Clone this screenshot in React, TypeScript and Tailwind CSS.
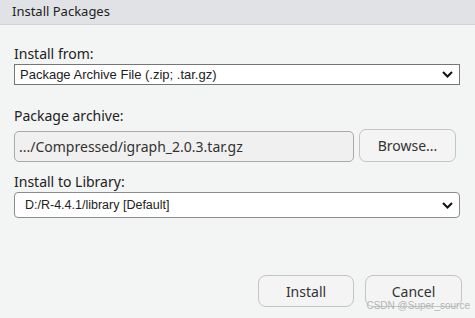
import React from "react";

function Chevron() {
  return (
    <svg width="11" height="7" viewBox="0 0 11 7" className="shrink-0">
      <polyline points="1,1 5.5,5.5 10,1" fill="none" stroke="#111" strokeWidth="2" />
    </svg>
  );
}

export default function App() {
  const ui = { fontFamily: '"Noto Sans", "Open Sans", sans-serif' };
  const arial = { fontFamily: '"Liberation Sans", Arial, sans-serif' };

  return (
    <div className="relative w-[475px] h-[318px] bg-[#f3f4f4] text-[#222] overflow-hidden" style={ui}>
      {/* Title bar */}
      <div className="h-[25px] bg-[#e1e2e6] border-b border-[#d2d4d8] flex items-center pl-[12px] text-[13px]">
        Install Packages
      </div>

      <div className="pl-[14px] pr-[15px]">
        <div className="mt-[19px] text-[14px] leading-[20px]">Install from:</div>
        <div
          className="h-[21px] bg-white border border-[#767676] flex items-center justify-between pl-[5px] pr-[6px] text-[13px]"
          style={arial}
        >
          <span>Package Archive File (.zip; .tar.gz)</span>
          <Chevron />
        </div>

        <div className="mt-[21px] text-[14px] leading-[20px]">Package archive:</div>
        <div className="mt-[5px] flex gap-[5px]">
          <div className="w-[340px] h-[31px] rounded-[5px] border border-[#a9a9a9] bg-[#f0f0f0] flex items-center pl-[4px] text-[14px] text-[#333]">
            .../Compressed/igraph_2.0.3.tar.gz
          </div>
          <button className="w-[97px] h-[33px] -mt-[2px] rounded-[7px] border border-[#c4c4c4] bg-[#f4f4f4] text-[14px] text-[#333]">
            Browse...
          </button>
        </div>

        <div className="mt-[10px] text-[14px] leading-[20px]">Install to Library:</div>
        <div
          className="w-[446px] h-[26px] bg-white border border-[#8c8c8c] rounded-[4px] flex items-center justify-between pl-[10px] pr-[6px] text-[12px]"
          style={arial}
        >
          <span className="text-[12.5px]">D:/R-4.4.1/library [Default]</span>
          <Chevron />
        </div>

        <div className="mt-[57px] flex justify-end gap-[11px]">
          <button className="w-[96px] h-[32px] rounded-[8px] border border-[#c4c4c4] bg-[#f4f4f4] text-[14px] text-[#333]">
            Install
          </button>
          <button className="w-[97px] h-[32px] rounded-[8px] border border-[#c4c4c4] bg-[#f4f4f4] text-[14px] text-[#333] -mr-[2px]">
            Cancel
          </button>
        </div>
      </div>

      <div
        className="absolute right-[5px] top-[300px] text-[10px] leading-[12px] text-[#b5b5b5]"
        style={arial}
      >
        CSDN @Super_source
      </div>
    </div>
  );
}
